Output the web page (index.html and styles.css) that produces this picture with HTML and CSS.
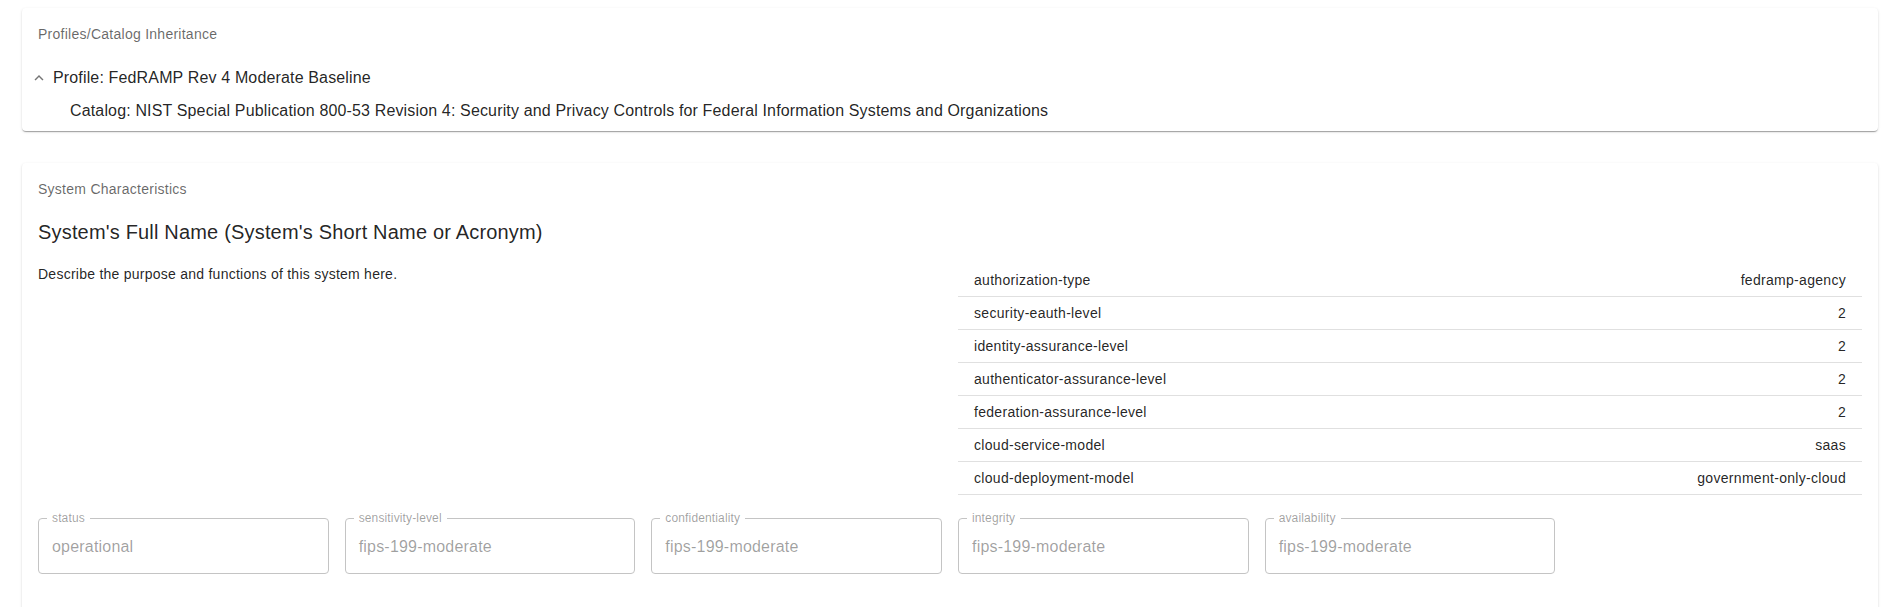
FILE: index.html
```html
<!DOCTYPE html>
<html lang="en">
<head>
<meta charset="utf-8">
<title>System Security Plan</title>
<link rel="stylesheet" href="styles.css">
</head>
<body>
<main class="page">
  <section class="card card-inherit">
    <div class="card-subtitle">Profiles/Catalog Inheritance</div>
    <ul class="tree">
      <li class="tree-item">
        <div class="tree-row">
          <span class="tree-icon">
            <svg viewBox="0 0 24 24" width="18" height="18" aria-hidden="true"><path d="M12 8l-6 6 1.41 1.41L12 10.83l4.59 4.58L18 14z"/></svg>
          </span>
          <span class="tree-label">Profile: FedRAMP Rev 4 Moderate Baseline</span>
        </div>
        <ul class="tree-group">
          <li class="tree-item">
            <div class="tree-row">
              <span class="tree-icon"></span>
              <span class="tree-label">Catalog: NIST Special Publication 800-53 Revision 4: Security and Privacy Controls for Federal Information Systems and Organizations</span>
            </div>
          </li>
        </ul>
      </li>
    </ul>
  </section>

  <section class="card card-system">
    <div class="card-subtitle">System Characteristics</div>
    <h2 class="system-title">System's Full Name (System's Short Name or Acronym)</h2>
    <div class="system-grid">
      <p class="system-desc">Describe the purpose and functions of this system here.</p>
      <table class="info-table">
        <tbody>
          <tr><td>authorization-type</td><td class="val">fedramp-agency</td></tr>
          <tr><td>security-eauth-level</td><td class="val">2</td></tr>
          <tr><td>identity-assurance-level</td><td class="val">2</td></tr>
          <tr><td>authenticator-assurance-level</td><td class="val">2</td></tr>
          <tr><td>federation-assurance-level</td><td class="val">2</td></tr>
          <tr><td>cloud-service-model</td><td class="val">saas</td></tr>
          <tr><td>cloud-deployment-model</td><td class="val">government-only-cloud</td></tr>
        </tbody>
      </table>
    </div>
    <div class="field-grid">
      <fieldset class="field"><legend class="field-label">status</legend><div class="field-value">operational</div></fieldset>
      <fieldset class="field"><legend class="field-label">sensitivity-level</legend><div class="field-value">fips-199-moderate</div></fieldset>
      <fieldset class="field"><legend class="field-label">confidentiality</legend><div class="field-value">fips-199-moderate</div></fieldset>
      <fieldset class="field"><legend class="field-label">integrity</legend><div class="field-value">fips-199-moderate</div></fieldset>
      <fieldset class="field"><legend class="field-label">availability</legend><div class="field-value">fips-199-moderate</div></fieldset>
    </div>
  </section>
</main>
</body>
</html>
```
FILE: styles.css
```css
html, body {
  margin: 0;
  padding: 0;
  background: #ffffff;
}

body {
  font-family: "Liberation Sans", Arial, sans-serif;
  color: rgba(0, 0, 0, 0.87);
}

.page {
  padding: 8px 20px 0 22px;
}

.card {
  background: #ffffff;
  border-radius: 4px;
  box-shadow: 0 2px 1px -1px rgba(0, 0, 0, 0.2), 0 1px 1px 0 rgba(0, 0, 0, 0.14), 0 1px 3px 0 rgba(0, 0, 0, 0.12);
  padding: 16px;
}

.card-inherit {
  padding-bottom: 4px;
}

.card-system {
  margin-top: 32px;
  padding-bottom: 40px;
}

.card-subtitle {
  font-size: 14px;
  line-height: 20px;
  letter-spacing: 0.26px;
  color: rgba(0, 0, 0, 0.6);
}

.tree,
.tree-group {
  list-style: none;
  margin: 0;
  padding: 0;
}

.tree {
  margin-top: 18px;
}

.tree-group {
  margin-left: 17px;
}

.tree-row {
  display: flex;
  align-items: center;
  padding: 4px 0;
}

.tree-group .tree-row {
  padding-top: 5px;
}

.tree-icon {
  width: 15px;
  margin-left: -7px;
  margin-right: 3px;
  display: flex;
  justify-content: center;
  flex-shrink: 0;
}

.tree-icon svg {
  fill: rgba(0, 0, 0, 0.54);
  flex-shrink: 0;
}

.tree-label {
  padding-left: 4px;
  font-size: 16px;
  line-height: 24px;
  letter-spacing: 0.15px;
}

.system-title {
  margin: 17px 0 0;
  font-size: 20px;
  line-height: 32px;
  font-weight: 400;
  letter-spacing: 0.18px;
}

.system-grid {
  display: grid;
  grid-template-columns: 1fr 1fr;
  column-gap: 16px;
  margin-top: 16px;
  align-items: start;
}

.system-desc {
  margin: 0;
  font-size: 14px;
  line-height: 20px;
  letter-spacing: 0.25px;
}

.info-table {
  width: 100%;
  border-collapse: collapse;
  font-size: 14px;
  line-height: 20px;
  letter-spacing: 0.3px;
}

.info-table td {
  padding: 6px 16px;
  border-bottom: 1px solid #e0e0e0;
}

.info-table td.val {
  text-align: right;
}

.field-grid {
  display: grid;
  grid-template-columns: repeat(6, 1fr);
  column-gap: 16px;
  margin-top: 17px;
}

.field {
  margin: 0;
  padding: 0 13px 15px;
  border: 1px solid #c4c4c4;
  border-radius: 4px;
  min-width: 0;
}

.field-label {
  margin-left: -5px;
  padding: 0 5px;
  font-size: 12px;
  line-height: 12px;
  letter-spacing: 0.14px;
  color: rgba(0, 0, 0, 0.38);
}

.field-value {
  padding-top: 11px;
  font-size: 16px;
  line-height: 23px;
  letter-spacing: 0.2px;
  color: rgba(0, 0, 0, 0.38);
}
```
